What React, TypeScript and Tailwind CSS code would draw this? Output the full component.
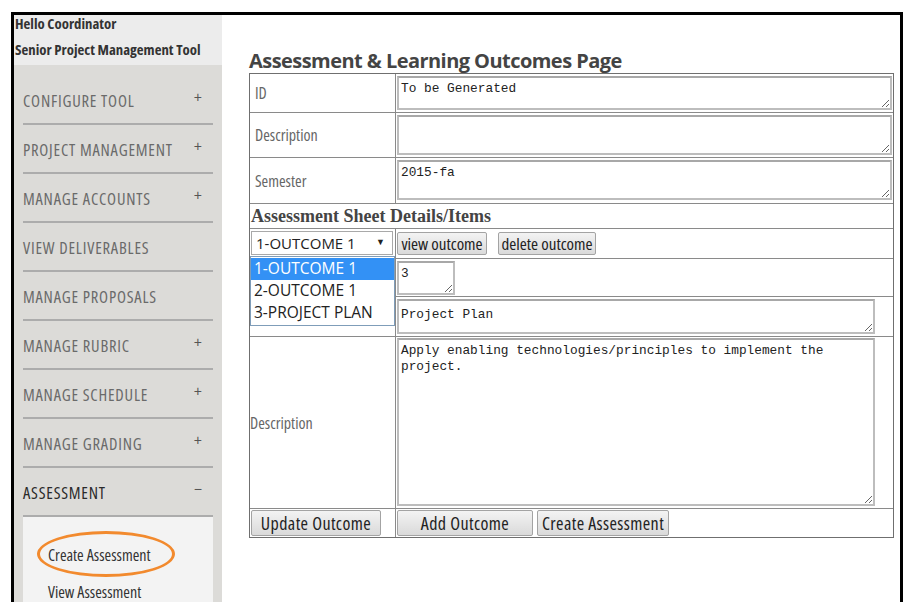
import React from "react";

const menu: { label: string; sign?: string; active?: boolean }[] = [
  { label: "CONFIGURE TOOL", sign: "+" },
  { label: "PROJECT MANAGEMENT", sign: "+" },
  { label: "MANAGE ACCOUNTS", sign: "+" },
  { label: "VIEW DELIVERABLES" },
  { label: "MANAGE PROPOSALS" },
  { label: "MANAGE RUBRIC", sign: "+" },
  { label: "MANAGE SCHEDULE", sign: "+" },
  { label: "MANAGE GRADING", sign: "+" },
  { label: "ASSESSMENT", sign: "−", active: true },
];

function Btn({ children, w }: { children: React.ReactNode; w: string }) {
  return (
    <button
      className={
        "rounded-[2px] border border-[#a3a3a3] bg-linear-to-b from-[#f3f3f3] to-[#dadada] leading-none text-[#222] font-['Open_Sans',sans-serif] font-stretch-condensed whitespace-nowrap " +
        w
      }
    >
      {children}
    </button>
  );
}

function Area({ value, cls }: { value: string; cls: string }) {
  return (
    <textarea
      readOnly
      defaultValue={value}
      className={
        "block border-2 border-[#bdbdbd] border-t-[#a8a8a8] bg-white px-[2px] pt-[3px] text-[12.8px] leading-[16px] text-[#222] font-['Liberation_Mono',monospace] outline-none " +
        cls
      }
    />
  );
}

export default function App() {
  return (
    <div className="w-[918px] h-[602px] overflow-hidden bg-white">
      <div className="ml-[11px] mt-[12px] w-[892px] h-[640px] border-[3px] border-black flex">
        {/* Sidebar */}
        <aside className="w-[208px] shrink-0 flex flex-col">
          <div className="h-[50px] bg-[#ececec] pl-[1px] font-['Open_Sans',sans-serif] font-stretch-condensed font-bold text-[14.8px] text-[#333]">
            <div className="leading-[16px]">Hello Coordinator</div>
            <div className="mt-[10px] leading-[16px] whitespace-nowrap">Senior Project Management Tool</div>
          </div>
          <div className="flex-1 bg-[#dcdbd8] pt-[11px]">
            <nav className="mx-[9px]">
              {menu.map((m) => (
                <div
                  key={m.label}
                  className="h-[49px] pt-[3px] flex items-center justify-between border-b-2 border-[#acacac] pr-[11px]"
                >
                  <span
                    className={
                      "text-[16.5px] tracking-[0.8px] whitespace-nowrap font-['Open_Sans',sans-serif] font-stretch-condensed " +
                      (m.active ? "text-[#2a2a2a]" : "text-[#6a6a6a]")
                    }
                  >
                    {m.label}
                  </span>
                  {m.sign && (
                    <span className="-mt-[7px] text-[14px] text-[#555] font-['Liberation_Sans',sans-serif]">
                      {m.sign}
                    </span>
                  )}
                </div>
              ))}
              <div className="relative bg-[#f3f3f3] h-[120px] pl-[25px] pt-[28px] text-[16px] text-[#333] font-['Open_Sans',sans-serif] font-stretch-condensed">
                <div className="leading-[20px]">Create Assessment</div>
                <div className="mt-[17px] leading-[20px]">View Assessment</div>
                <div className="absolute left-[14px] top-[14px] w-[138px] h-[46px] rounded-[50%] border-[3px] border-[#f28a2e]" />
              </div>
            </nav>
          </div>
        </aside>

        {/* Main */}
        <main className="flex-1 pl-[27px] pt-[33px]">
          <h1 className="text-[20px] leading-[25px] font-bold text-[#444] font-['Open_Sans',sans-serif] tracking-[-0.55px] whitespace-nowrap">
            Assessment &amp; Learning Outcomes Page
          </h1>
          <div className="relative w-[645px] border border-[#6f6f6f] text-[16px] text-[#666] font-['Open_Sans',sans-serif] font-stretch-condensed">
            {/* ID */}
            <div className="flex h-[39px] border-b border-[#8a8a8a]">
              <div className="w-[146px] shrink-0 border-r border-[#8a8a8a] pl-[5px] flex items-center">ID</div>
              <div className="flex-1 pl-[1px] pr-[1px] pt-[2px]">
                <Area value="To be Generated" cls="w-full h-[34px]" />
              </div>
            </div>
            {/* Description */}
            <div className="flex h-[45px] border-b border-[#8a8a8a]">
              <div className="w-[146px] shrink-0 border-r border-[#8a8a8a] pl-[5px] flex items-center">Description</div>
              <div className="flex-1 pl-[1px] pr-[1px] pt-[2px]">
                <Area value="" cls="w-full h-[40px]" />
              </div>
            </div>
            {/* Semester */}
            <div className="flex h-[46px] border-b border-[#8a8a8a]">
              <div className="w-[146px] shrink-0 border-r border-[#8a8a8a] pl-[5px] flex items-center">Semester</div>
              <div className="flex-1 pl-[1px] pr-[1px] pt-[2px]">
                <Area value="2015-fa" cls="w-full h-[40px]" />
              </div>
            </div>
            {/* Section heading */}
            <div className="h-[25px] border-b border-[#8a8a8a] pl-[1px] flex items-center font-['Liberation_Serif',serif] font-bold text-[18px] text-[#444] font-stretch-normal">
              Assessment Sheet Details/Items
            </div>
            {/* Outcome selector */}
            <div className="flex h-[30px] border-b border-[#8a8a8a]">
              <div className="w-[146px] shrink-0 border-r border-[#8a8a8a] pl-[1px] pt-[2px]">
                <div className="w-[142px] h-[24px] border border-[#a9a9a9] bg-white flex items-center justify-between pl-[4px] pr-[7px] text-[15px] font-stretch-normal text-[#222]">
                  <span>1-OUTCOME 1</span>
                  <span className="text-[9px] text-[#222] font-['Liberation_Sans',sans-serif]">▼</span>
                </div>
              </div>
              <div className="flex-1 pl-[1px] pt-[3px] flex gap-[11px]">
                <Btn w="w-[90px] h-[23px] text-[17px]">view outcome</Btn>
                <Btn w="w-[98px] h-[23px] text-[17px]">delete outcome</Btn>
              </div>
            </div>
            {/* Weight */}
            <div className="flex h-[38px] border-b border-[#8a8a8a]">
              <div className="w-[146px] shrink-0 border-r border-[#8a8a8a]" />
              <div className="flex-1 pl-[1px] pt-[2px]">
                <Area value="3" cls="w-[58px] h-[34px]" />
              </div>
            </div>
            {/* Title */}
            <div className="flex h-[40px] border-b border-[#8a8a8a]">
              <div className="w-[146px] shrink-0 border-r border-[#8a8a8a]" />
              <div className="flex-1 pl-[1px] pt-[2px]">
                <Area value="Project Plan" cls="w-[478px] h-[35px] pt-[6px]" />
              </div>
            </div>
            {/* Outcome description */}
            <div className="flex h-[172px] border-b border-[#8a8a8a]">
              <div className="w-[146px] shrink-0 border-r border-[#8a8a8a] flex items-center">Description</div>
              <div className="flex-1 pl-[1px] pt-[1px]">
                <Area
                  value="Apply enabling technologies/principles to implement the project."
                  cls="w-[478px] h-[168px]"
                />
              </div>
            </div>
            {/* Actions */}
            <div className="flex h-[28px]">
              <div className="w-[146px] shrink-0 border-r border-[#8a8a8a] pl-[1px] pt-[1px]">
                <Btn w="w-[130px] h-[26px] text-[18px] tracking-[0.4px]">Update Outcome</Btn>
              </div>
              <div className="flex-1 pl-[1px] pt-[1px] flex gap-[4px]">
                <Btn w="w-[136px] h-[26px] text-[18px] tracking-[0.4px]">Add Outcome</Btn>
                <Btn w="w-[132px] h-[26px] text-[18px] tracking-[0.4px]">Create Assessment</Btn>
              </div>
            </div>

            {/* Open option list of the outcome selector */}
            <div className="absolute left-[0px] top-[182px] w-[145px] border border-[#7f9db9] bg-white py-[1px] text-[15.5px] font-stretch-normal text-[#222]">
              <div className="h-[22px] pl-[3px] flex items-center bg-[#3391f5] text-white">1-OUTCOME 1</div>
              <div className="h-[22px] pl-[3px] flex items-center">2-OUTCOME 1</div>
              <div className="h-[22px] pl-[3px] flex items-center">3-PROJECT PLAN</div>
            </div>
          </div>
        </main>
      </div>
    </div>
  );
}
